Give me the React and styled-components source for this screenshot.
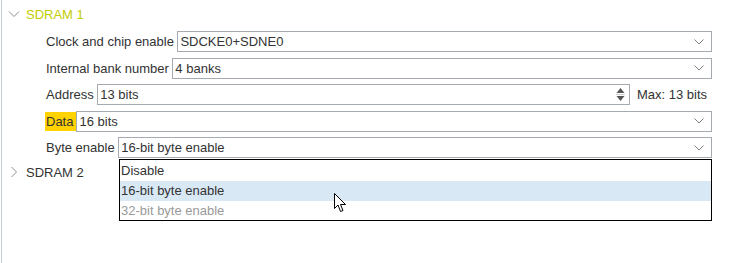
import React from "react";
import styled, { createGlobalStyle } from "styled-components";

const Global = createGlobalStyle`
  html, body { margin: 0; padding: 0; background: #fff; }
  body { font-family: "Liberation Sans", Arial, sans-serif; font-size: 13px; color: #333; }
`;

const Panel = styled.div`
  position: relative;
  width: 729px;
  height: 263px;
  box-sizing: border-box;
  border-left: 1px solid #c3ccd4;
  margin-left: 1px;
  overflow: hidden;
`;

const Header = styled.div`
  display: flex;
  align-items: center;
  height: 22px;
  padding-left: ${(p) => p.$pl || 6}px;
  margin-top: ${(p) => p.$top || 0}px;
  font-size: 13px;
  color: ${(p) => (p.$active ? "#c3cc00" : "#333")};
`;

const Chevron = styled.svg`
  width: 12px;
  height: 12px;
  margin-right: ${(p) => p.$mr || 6}px;
  flex: none;
`;

const Fields = styled.div`
  display: flex;
  flex-direction: column;
  gap: 5.5px;
  padding: 6px 18px 0 43px;
  position: relative;
`;

const Row = styled.div`
  display: flex;
  align-items: center;
  height: 21px;
`;

const Label = styled.span`
  white-space: nowrap;
  padding: 0 ${(p) => (p.$hl ? "3px" : "3.5px")} 0 1px;
  line-height: 19px;
  background: ${(p) => (p.$hl ? "#ffd200" : "transparent")};
`;

const Box = styled.div`
  flex: 1;
  height: 21px;
  box-sizing: border-box;
  border: 1px solid #a5abb0;
  display: flex;
  align-items: center;
  padding-left: 2px;
  background: #fff;
  position: relative;
`;

const Value = styled.span`
  flex: 1;
  white-space: nowrap;
`;

const SelArrow = styled.svg`
  width: 10px;
  height: 6px;
  margin-right: 7px;
`;

const Spin = styled.svg`
  width: 9px;
  height: 17px;
  margin-right: 4px;
`;

const Max = styled.span`
  margin-left: 7px;
  white-space: nowrap;
  width: 75px;
`;

const List = styled.div`
  position: absolute;
  left: 117px;
  right: 18px;
  top: 159px;
  height: 62px;
  box-sizing: border-box;
  border: 1px solid #000;
  background: #fff;
  display: flex;
  flex-direction: column;
  padding-top: 1px;
`;

const Item = styled.div`
  height: 20px;
  line-height: 20px;
  padding-left: 1px;
  background: ${(p) => (p.$sel ? "#d9e8f5" : "transparent")};
  color: ${(p) => (p.$dis ? "#9a9a9a" : "#333")};
`;

const Cursor = styled.svg`
  position: absolute;
  left: 332px;
  top: 193px;
  width: 13px;
  height: 20px;
`;

const Down = () => (
  <SelArrow viewBox="0 0 10 6">
    <path d="M0.5 0.5 L5 5 L9.5 0.5" fill="none" stroke="#7a7f85" strokeWidth="1" />
  </SelArrow>
);

const Select = ({ value }) => (
  <Box>
    <Value>{value}</Value>
    <Down />
  </Box>
);

export default function App() {
  return (
    <>
      <Global />
      <Panel>
        <Header $active $top={3}>
          <Chevron viewBox="0 0 12 12">
            <path d="M1 3.5 L6 8.5 L11 3.5" fill="none" stroke="#8a8f94" strokeWidth="1" />
          </Chevron>
          SDRAM 1
        </Header>
        <Fields>
          <Row>
            <Label>Clock and chip enable</Label>
            <Select value="SDCKE0+SDNE0" />
          </Row>
          <Row>
            <Label>Internal bank number</Label>
            <Select value="4 banks" />
          </Row>
          <Row>
            <Label>Address</Label>
            <Box>
              <Value>13 bits</Value>
              <Spin viewBox="0 0 9 17">
                <path d="M0.5 7 L4.5 2 L8.5 7 Z" fill="#555" />
                <path d="M0.5 10 L4.5 15 L8.5 10 Z" fill="#555" />
                <line x1="0" y1="8.5" x2="9" y2="8.5" stroke="#ccc" strokeWidth="1" />
              </Spin>
            </Box>
            <Max>Max: 13 bits</Max>
          </Row>
          <Row>
            <Label $hl>Data</Label>
            <Select value="16 bits" />
          </Row>
          <Row>
            <Label>Byte enable</Label>
            <Select value="16-bit byte enable" />
          </Row>
        </Fields>
        <Header $top={3} $pl={6}>
          <Chevron viewBox="0 0 12 12" $mr={6}>
            <path d="M3.5 1 L8.5 6 L3.5 11" fill="none" stroke="#8a8f94" strokeWidth="1" />
          </Chevron>
          SDRAM 2
        </Header>
        <List>
          <Item>Disable</Item>
          <Item $sel>16-bit byte enable</Item>
          <Item $dis>32-bit byte enable</Item>
        </List>
        <Cursor viewBox="0 0 13 20">
          <path
            d="M0.5 0.5 L0.5 15.5 L4 12 L6.5 18.5 L9 17.5 L6.5 11.5 L11.5 11.5 Z"
            fill="#fff"
            stroke="#000"
            strokeWidth="1"
          />
        </Cursor>
      </Panel>
    </>
  );
}
